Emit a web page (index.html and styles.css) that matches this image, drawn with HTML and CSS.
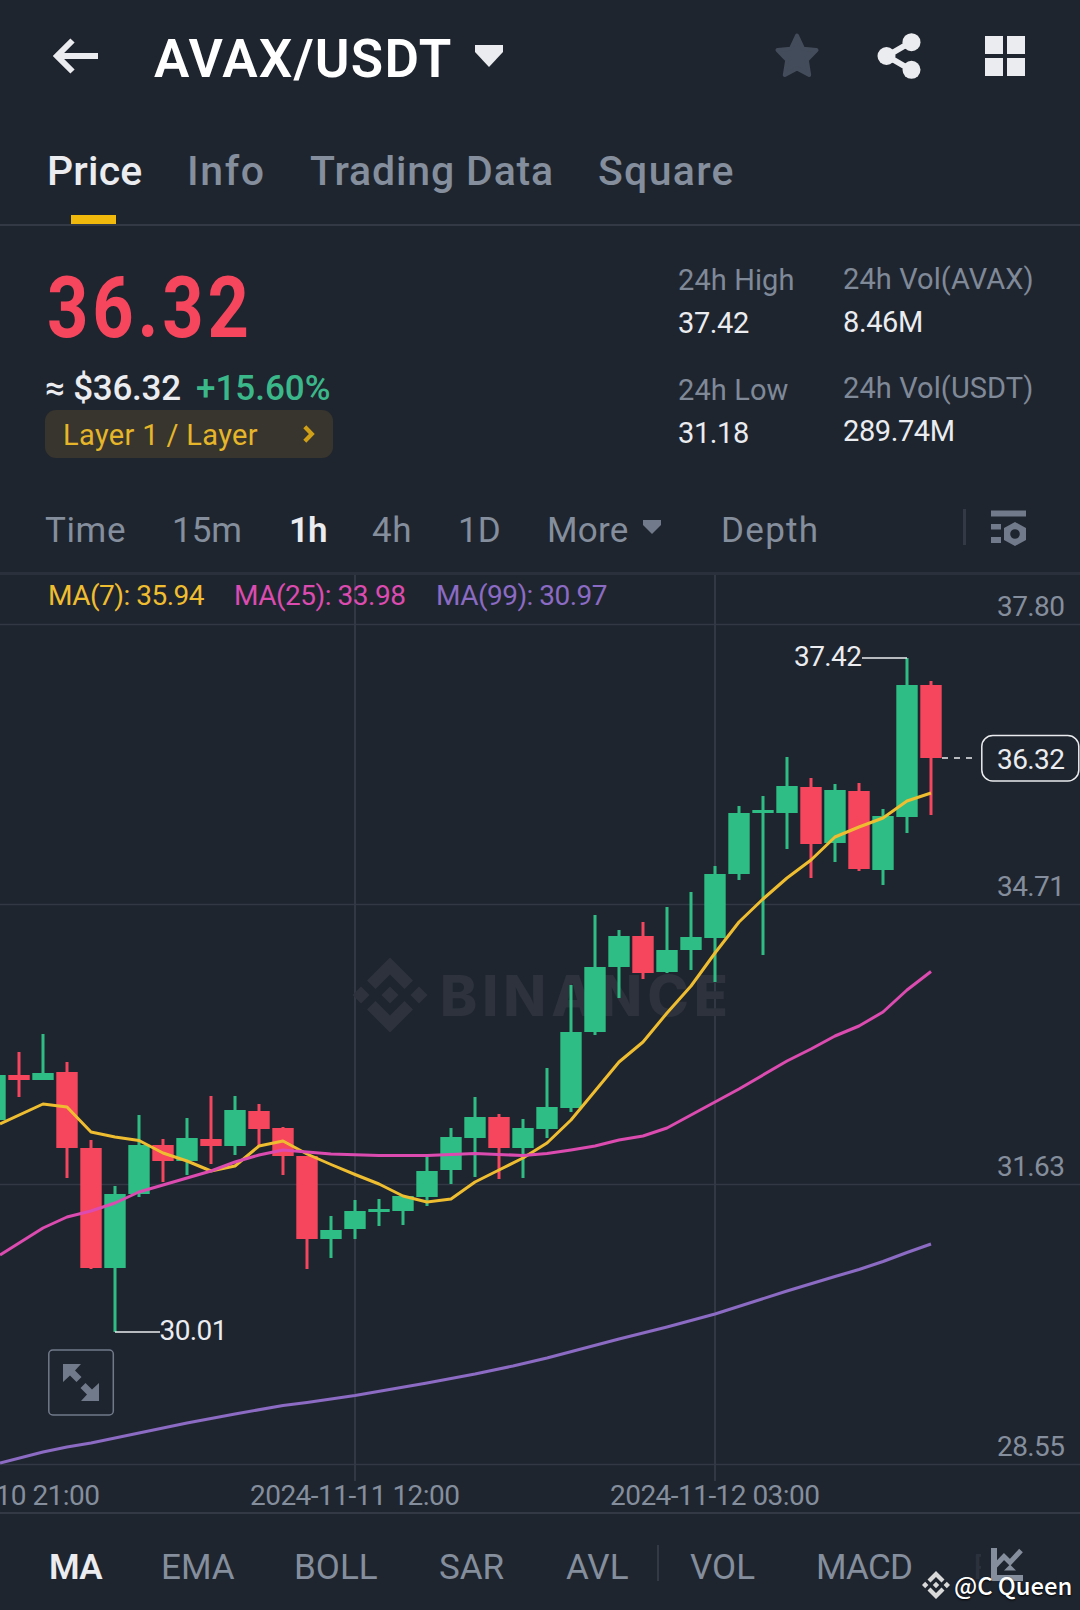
FILE: index.html
```html
<!DOCTYPE html>
<html lang="en">
<head>
<meta charset="utf-8">
<title>AVAX/USDT</title>
<link rel="stylesheet" href="styles.css">
</head>
<body>
<div class="screen">
  <header class="topbar">
    <svg class="back" width="46" height="36" viewBox="0 0 46 36"><path d="M45 18H7M19.500 2.500 4 18 19.500 33.500" fill="none" stroke="#eaecef" stroke-width="6"/></svg>
    <h1 class="pair">AVAX/USDT</h1>
    <svg class="pair-caret" width="28" height="22" viewBox="0 0 28 22"><path d="M0 0H28V7L14 22 0 7Z" fill="#eaecef"/></svg>
    <div class="actions">
      <svg width="46" height="48" viewBox="0 0 46 48"><path d="M23 3.500 29 16.700 42.500 18 32.800 28 35.200 43 23 36.500 10.800 43 13.200 28 3.500 18 17 16.700Z" fill="#434c5a" stroke="#434c5a" stroke-width="4" stroke-linejoin="round"/></svg>
      <svg width="44" height="48" viewBox="0 0 44 48"><path d="M10 24 34 10M10 24 34 38" stroke="#eaecef" stroke-width="6"/><g fill="#eaecef"><circle cx="9.500" cy="24" r="9"/><circle cx="34.500" cy="10.200" r="9"/><circle cx="34.500" cy="37.800" r="9"/></g></svg>
      <svg width="40" height="40" viewBox="0 0 40 40"><path d="M0 0H18V18H0ZM22 0H40V18H22ZM0 22H18V40H0ZM22 22H40V40H22Z" fill="#eaecef"/></svg>
    </div>
  </header>

  <nav class="tabs">
    <span class="tab active w-price">Price</span>
    <span class="tab w-info">Info</span>
    <span class="tab w-trading">Trading Data</span>
    <span class="tab w-square">Square</span>
  </nav>

  <section class="summary">
    <div class="quote">
      <div class="last">36.32</div>
      <div class="sub"><span class="fiat">≈ $36.32</span><span class="change">+15.60%</span></div>
      <div class="badge"><span>Layer 1 / Layer</span>
        <svg width="12" height="18" viewBox="0 0 12 18"><path d="M1.800 1.800 8.800 9 1.800 16.200" fill="none" stroke="#cf9f17" stroke-width="4.200"/></svg>
      </div>
    </div>
    <dl class="stats">
      <dt>24h High</dt><dd>37.42</dd>
      <dt>24h Low</dt><dd>31.18</dd>
    </dl>
    <dl class="stats volume">
      <dt>24h Vol(AVAX)</dt><dd>8.46M</dd>
      <dt>24h Vol(USDT)</dt><dd>289.74M</dd>
    </dl>
  </section>

  <nav class="intervals">
    <span class="i-time">Time</span><span class="i-15m">15m</span><span class="i-1h active">1h</span><span class="i-4h">4h</span><span class="i-1d">1D</span><span class="i-more">More</span>
    <svg class="more-caret" width="18" height="14" viewBox="0 0 18 14"><path d="M0 0H18V5L9 14 0 5Z" fill="#707a8a"/></svg>
    <span class="i-depth">Depth</span>
    <i class="sep"></i>
    <svg width="35" height="36" viewBox="0 0 35 36"><path d="M0 .5H35V6.500H0ZM0 14H10V19.500H0ZM0 27H10V33H0Z" fill="#707a8a"/><path fill-rule="evenodd" d="M24 12 35 18V30L24 36 13 30V18ZM24 19.200A4.800 4.800 0 1 0 24 28.800 4.800 4.800 0 1 0 24 19.200Z" fill="#707a8a"/></svg>
  </nav>

  <section class="chart">
    <svg width="1080" height="937" viewBox="0 575 1080 937">
      <path class="grid" d="M0 624.500H1080M0 904.500H1080M0 1184.500H1080M0 1464.500H1080"/>
      <path class="grid v" d="M355 575V1481M715 575V1481"/>
      <g class="mark">
        <path d="M390 957.500 413 980.500 404.500 989 390 974.500 375.500 989 367 980.500ZM390 1032.500 413 1009.500 404.500 1001 390 1015.500 375.500 1001 367 1009.500ZM390 986.500 398.500 995 390 1003.500 381.500 995ZM361 986.500 369.500 995 361 1003.500 352.500 995ZM419 986.500 427.500 995 419 1003.500 410.500 995Z"/>
        <text x="440" y="1015.500" textLength="288">BINANCE</text>
      </g>
      <path class="wick up" d="M43 1034V1080M115 1186V1332M139 1115V1197M187 1118V1175M235 1096V1155M331 1216V1258M355 1200V1239M379 1199V1226M403 1196V1225M427 1157V1206M451 1128V1184M475 1097V1177M523 1119V1178M547 1068V1138M571 985V1112M595 915V1035M619 930V998M667 907V973M691 892V970M715 866V982M739 806V880M763 796V955M787 757V849M835 784V862M883 809V885M907 658V833"/>
      <path class="wick down" d="M19 1052V1097M67 1062V1178M91 1140V1269M163 1139V1182M211 1096V1164M259 1104V1146M283 1127V1175M307 1156V1269M499 1114V1179M643 922V979M811 778V878M859 783V871M931 681V815"/>
      <path class="body up" d="M-5 1075V1120M43 1073V1080M115 1194V1268M139 1145V1194M187 1138V1161M235 1110V1146M331 1230V1239M355 1211V1229M379 1209V1212M403 1196V1211M427 1171V1197M451 1137V1170M475 1117V1138M523 1128V1148M547 1107V1129M571 1032V1108M595 967V1032M619 936V967M667 950V972M691 937V950M715 874V938M739 813V874M763 810V813M787 786V813M835 790V843M883 816V870M907 685V817"/>
      <path class="body down" d="M19 1075V1080M67 1072V1148M91 1148V1268M163 1145V1161M211 1139V1146M259 1111V1129M283 1128V1156M307 1156V1239M499 1117V1148M643 936V973M811 787V844M859 791V869M931 685V758"/>
      <polyline class="ma ma7" points="0,1124 43,1104 67,1107 91,1132 115,1137 139,1140.500 163,1153 187,1161 211,1171 235,1166 259,1146 283,1141 307,1154 331,1164.500 355,1174.500 379,1184 403,1196 427,1202 451,1199 475,1182 499,1170 523,1158 547,1143 571,1120 595,1091 619,1062 643,1042 667,1013 691,986 715,953 739,922 763,899 787,878 811,860 835,837 859,827 883,818 907,801 931,793"/>
      <polyline class="ma ma25" points="0,1255 43,1228 67,1217 91,1211 115,1203 139,1192 163,1185 187,1178 211,1171 235,1162 259,1155 283,1150 307,1152 331,1154 379,1155.500 427,1155.500 475,1153.500 523,1155.500 547,1153.500 571,1150 595,1146 619,1140 643,1136 667,1128 691,1115 715,1102 739,1089 787,1061 811,1049 835,1036 859,1026 883,1012 907,990 931,971.500"/>
      <polyline class="ma ma99" points="0,1463 43,1452 67,1447 91,1443 139,1433 187,1423 235,1414 283,1405.500 307,1402.500 355,1395.500 427,1383 475,1374 513,1366 547,1358 619,1339 667,1327 715,1314 787,1291 835,1276.500 859,1269.500 883,1261.500 907,1252.500 931,1244"/>
      <path class="pointer" d="M862 658H907M115 1332H160"/>
      <path class="pointer dash" d="M942 758H976"/>
      <rect class="tag" x="981.800" y="735.500" width="97" height="45.500" rx="11"/>
      <g class="legend">
        <text class="c7" x="48" y="605" textLength="156.500">MA(7): 35.94</text>
        <text class="c25" x="234" y="605" textLength="172">MA(25): 33.98</text>
        <text class="c99" x="436" y="605" textLength="171.500">MA(99): 30.97</text>
      </g>
      <g class="axis">
        <text x="997" y="616" textLength="68">37.80</text>
        <text x="997" y="896" textLength="68">34.71</text>
        <text x="997" y="1176" textLength="68">31.63</text>
        <text x="997" y="1456" textLength="68">28.55</text>
        <text x="-110" y="1505" textLength="210">2024-11-10 21:00</text>
        <text x="250" y="1505" textLength="210">2024-11-11 12:00</text>
        <text x="610" y="1505" textLength="210">2024-11-12 03:00</text>
      </g>
      <g class="bright">
        <text x="997" y="769" textLength="68">36.32</text>
        <text x="794" y="666" textLength="68">37.42</text>
        <text x="159.500" y="1340" textLength="68">30.01</text>
      </g>
      <rect class="expand" x="48.800" y="1350" width="64.500" height="65" rx="4"/>
      <path fill="#707a8a" d="M63 1364H81L75 1370.500 81.500 1377 76.500 1382 70 1375.500 63 1382ZM99 1401H81L87 1394.500 80.500 1388 85.500 1383 92 1389.500 99 1383Z"/>
    </svg>
  </section>

  <footer class="indicators">
    <span class="n-ma active">MA</span><span class="n-ema">EMA</span><span class="n-boll">BOLL</span><span class="n-sar">SAR</span><span class="n-avl">AVL</span>
    <i class="sep"></i>
    <span class="n-vol">VOL</span><span class="n-macd">MACD</span><span class="n-rsi">R</span>
    <svg width="32" height="33" viewBox="0 0 32 33"><path fill="#848e9c" d="M0 0H6V27H32V33H0Z"/><path fill="none" stroke="#848e9c" stroke-width="5" d="M4 18 13 8.500 19 14.500 30 2.500"/><path fill="#848e9c" d="M13 22.500 19 16.500 25 22.500Z"/></svg>
  </footer>

  <div class="signature">
    <svg width="28" height="28" viewBox="0 0 28 28"><path fill="#d9d9d9" d="M14 0 22.500 8.500 19.500 11.500 14 6 8.500 11.500 5.500 8.500ZM14 28 22.500 19.500 19.500 16.500 14 22 8.500 16.500 5.500 19.500ZM14 10.800 17.200 14 14 17.200 10.800 14ZM3.200 10.800 6.400 14 3.200 17.200 0 14ZM24.800 10.800 28 14 24.800 17.200 21.600 14Z"/></svg>
    <span>@C Queen</span>
  </div>
</div>
</body>
</html>
```

FILE: styles.css
```css
* { box-sizing: border-box; }
body {
  margin: 0;
  background: #1f252f;
  color: #eaecef;
  font-family: Roboto, "Liberation Sans", sans-serif;
}
.screen {
  position: relative;
  width: 1080px;
  height: 1610px;
  overflow: hidden;
}
span, h1, dt, dd { white-space: nowrap; }
svg { display: block; flex: none; }

/* Header */
.topbar {
  display: flex;
  align-items: center;
  height: 118px;
  padding: 0 55px 0 53px;
}
.back { margin-top: -7px; }
.pair {
  width: 321px;
  margin: 0 0 0 55px;
  color: #fff;
  font-size: 53px;
  font-weight: 600;
  line-height: 118px;
  letter-spacing: 1.200px;
}
.pair-caret { margin-top: -7px; }
.actions {
  display: flex;
  align-items: center;
  margin: -7px 0 0 auto;
}
.actions svg:nth-child(2) { margin: 0 64px 0 57px; }

/* Page tabs */
.tabs {
  display: flex;
  height: 108px;
  padding-left: 47px;
  border-bottom: 2px solid #333945;
  color: #848e9c;
  font-size: 41px;
  font-weight: 500;
  line-height: 106px;
}
.tab { position: relative; }
.tabs .active { color: #eaecef; }
.tabs .active::after {
  content: "";
  position: absolute;
  left: 24px;
  bottom: 0;
  width: 45px;
  height: 9px;
  background: #f0b90b;
}
.w-price { width: 140px; letter-spacing: .2px; }
.w-info { width: 123px; letter-spacing: 1.600px; }
.w-trading { width: 288px; letter-spacing: .85px; }
.w-square { letter-spacing: 1.300px; }

/* Price summary */
.summary {
  display: flex;
  height: 262px;
  padding-left: 45px;
}
.quote { width: 633px; padding-top: 40px; }
.last {
  margin-left: 2px;
  color: #f6465d;
  font-size: 85px;
  font-weight: 700;
  line-height: 84px;
  letter-spacing: 4.500px;
  transform: scaleX(.85);
  transform-origin: left;
}
.sub {
  display: flex;
  margin-top: 17px;
  font-size: 35px;
  font-weight: 500;
  line-height: 44px;
}
.fiat { width: 151px; letter-spacing: -.25px; }
.change { color: #3bb88a; }
.badge {
  display: flex;
  align-items: center;
  justify-content: space-between;
  width: 288px;
  height: 48px;
  margin-top: -1px;
  padding: 0 18px 0 18px;
  border-radius: 11px;
  background: #37352d;
  color: #e6b52a;
  font-size: 29px;
  letter-spacing: .35px;
}
.badge span { padding-top: 2px; }
.stats {
  width: 165px;
  margin: 0;
  padding-top: 32.5px;
  font-size: 29px;
  line-height: 43px;
}
.stats dt { color: #7f8998; letter-spacing: .1px; }
.stats dd { margin: 0 0 24px; letter-spacing: -.4px; }
.volume { padding-top: 32px; line-height: 42.500px; }

/* Interval picker */
.intervals, .indicators {
  display: flex;
  color: #848e9c;
  font-size: 35px;
}
.intervals {
  align-items: center;
  height: 84px;
  padding-left: 45px;
}
.intervals .active, .indicators .active { color: #eaecef; font-weight: 600; }
.i-time { width: 127px; letter-spacing: .6px; }
.i-15m { width: 117px; }
.i-1h { width: 83px; letter-spacing: -1px; }
.i-4h { width: 86px; letter-spacing: .5px; }
.i-1d { width: 89px; }
.i-more { width: 96px; letter-spacing: .2px; }
.more-caret { margin-top: -6px; }
.i-depth { width: 242px; margin-left: 60px; letter-spacing: 1.300px; }
.sep { flex: none; width: 3px; height: 36px; background: #333945; }
.intervals .sep { margin: -6px 25px 0 0; }
.intervals .sep + svg { margin-top: -4px; }

/* Chart */
.chart {
  height: 942px;
  border-top: 3px solid #2b313c;
  border-bottom: 2px solid #333945;
}
.chart path, .chart polyline { stroke-linejoin: round; }
.grid { stroke: #323844; stroke-width: 1.500; }
.grid.v { stroke-width: 2; }
.mark { fill: #2d323d; font: 800 56px Inter, sans-serif; }
.wick { stroke-width: 3; }
.body { stroke-width: 21.400; }
.up { stroke: #2ebd85; }
.down { stroke: #f6465d; }
.ma { fill: none; stroke-width: 3; }
.ma7 { stroke: #efbd30; }
.ma25 { stroke: #dc4bb0; }
.ma99 { stroke: #8b6bc3; }
.pointer { stroke: #eaecef; stroke-width: 1.500; }
.dash { stroke-dasharray: 6 6; }
.tag { fill: none; stroke: #eaecef; stroke-width: 1.500; }
.legend, .axis, .bright { font-size: 28px; }
.axis { fill: #848e9c; }
.bright { fill: #eaecef; }
.c7 { fill: #efbd30; }
.c25 { fill: #dc4bb0; }
.c99 { fill: #8b6bc3; }
.expand { fill: none; stroke: #707a8a; stroke-width: 1.500; }

/* Indicator picker */
.indicators {
  height: 96px;
  padding-left: 49px;
  line-height: 107px;
  overflow: hidden;
}
.indicators .sep { width: 2px; margin: 31px 31px 0 0; }
.n-ma { width: 112px; letter-spacing: -.8px; }
.n-ema { width: 133px; }
.n-boll { width: 145px; }
.n-sar { width: 127px; }
.n-avl { width: 91px; }
.n-vol { width: 126px; }
.n-macd { width: 157px; letter-spacing: -.8px; }
.n-rsi { width: 8px; margin-right: 10px; overflow: hidden; color: #2b323d; }
.indicators svg { margin-top: 34px; }

/* Author signature over the page corner */
.signature {
  position: absolute;
  left: 922px;
  top: 1565px;
  display: flex;
  align-items: center;
  gap: 4px;
  color: #fff;
  font: 500 23.800px/40px "Noto Sans CJK SC", sans-serif;
  text-shadow: 0 1px 2px #000;
}
```
